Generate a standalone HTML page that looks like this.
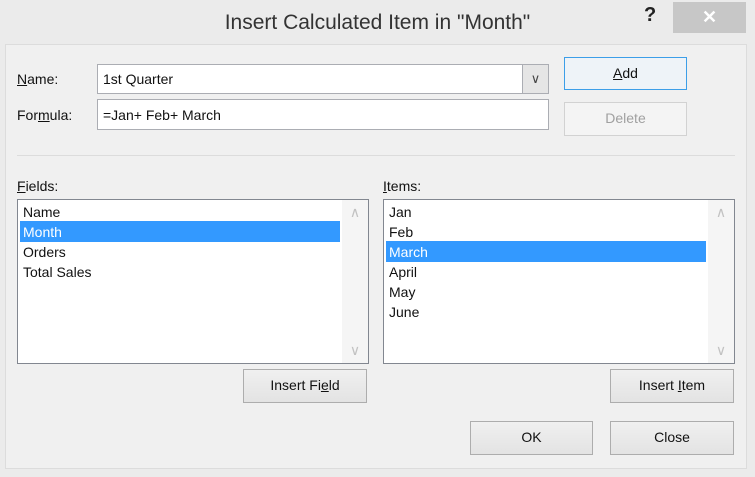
<!DOCTYPE html>
<html><head><style>
*{margin:0;padding:0;box-sizing:border-box}
body{width:755px;height:477px;background:#ebebeb;font-family:"Liberation Sans",sans-serif;font-size:14px;color:#111;position:relative;overflow:hidden}
.a{position:absolute}
.panel{left:5px;top:44px;width:742px;height:425px;background:#f0f0f0;border:1px solid #dcdcdc}
.box{background:#fff;border:1px solid #abadb3}
.btn{background:linear-gradient(#f0f0f0,#e3e3e3);border:1px solid #adadad;text-align:center;line-height:31px;font-size:14px}
.lb{background:#fff;border:1px solid #828790}
.it{position:absolute;left:4px;height:21px;line-height:21px;width:320px;padding-left:1px}
.sel{background:#3399ff;color:#fff;left:2px;padding-left:3px}
u{text-decoration:underline}
.sb{position:absolute;right:0;top:0;width:26px;height:100%;background:#f5f5f5;color:#c2c2c2;font-size:14px;text-align:center}
</style></head><body>
<div class="a" style="left:0;top:6px;width:755px;text-align:center;font-size:21px;color:#333;line-height:34px">Insert Calculated Item in "Month"</div>
<div class="a" style="left:644px;top:4px;font-size:20px;font-weight:bold;color:#222">?</div>
<div class="a" style="left:673px;top:2px;width:73px;height:31px;background:#c7c7c7;color:#fff;text-align:center;line-height:31px;font-size:18px;font-weight:bold">✕</div>
<div class="a panel"></div>
<div class="a" style="left:17px;top:71px"><u>N</u>ame:</div>
<div class="a box" style="left:97px;top:64px;width:452px;height:30px;padding:6px 5px">1st Quarter</div>
<div class="a" style="left:522px;top:65px;width:26px;height:28px;background:#e5e5e5;border-left:1px solid #abadb3;text-align:center;line-height:28px;color:#444;font-size:13px">∨</div>
<div class="a" style="left:17px;top:107px">For<u>m</u>ula:</div>
<div class="a box" style="left:97px;top:99px;width:452px;height:31px;padding:7px 5px">=Jan+ Feb+ March</div>
<div class="a btn" style="left:564px;top:57px;width:123px;height:33px;border-color:#3c9ee8;background:#eef3f8"><u>A</u>dd</div>
<div class="a btn" style="left:564px;top:102px;width:123px;height:34px;color:#a0a0a0;border-color:#d2d2d2;background:#f4f4f4">Delete</div>
<div class="a" style="left:17px;top:155px;width:718px;height:1px;background:#dcdcdc"></div>
<div class="a" style="left:17px;top:178px"><u>F</u>ields:</div>
<div class="a" style="left:383px;top:178px"><u>I</u>tems:</div>
<div class="a lb" style="left:17px;top:199px;width:352px;height:165px">
<div class="it" style="top:2px">Name</div>
<div class="it sel" style="top:21px;line-height:23px">Month</div>
<div class="it" style="top:42px">Orders</div>
<div class="it" style="top:62px">Total Sales</div>
<div class="sb"><div style="margin-top:4px">∧</div><div style="position:absolute;bottom:4px;width:100%">∨</div></div>
</div>
<div class="a lb" style="left:383px;top:199px;width:352px;height:165px">
<div class="it" style="top:2px">Jan</div>
<div class="it" style="top:22px">Feb</div>
<div class="it sel" style="top:41px;line-height:23px">March</div>
<div class="it" style="top:62px">April</div>
<div class="it" style="top:82px">May</div>
<div class="it" style="top:102px">June</div>
<div class="sb"><div style="margin-top:4px">∧</div><div style="position:absolute;bottom:4px;width:100%">∨</div></div>
</div>
<div class="a btn" style="left:243px;top:369px;width:124px;height:34px">Insert Fi<u>e</u>ld</div>
<div class="a btn" style="left:610px;top:369px;width:124px;height:34px">Insert <u>I</u>tem</div>
<div class="a btn" style="left:470px;top:421px;width:123px;height:34px">OK</div>
<div class="a btn" style="left:610px;top:421px;width:124px;height:34px">Close</div>
</body></html>
